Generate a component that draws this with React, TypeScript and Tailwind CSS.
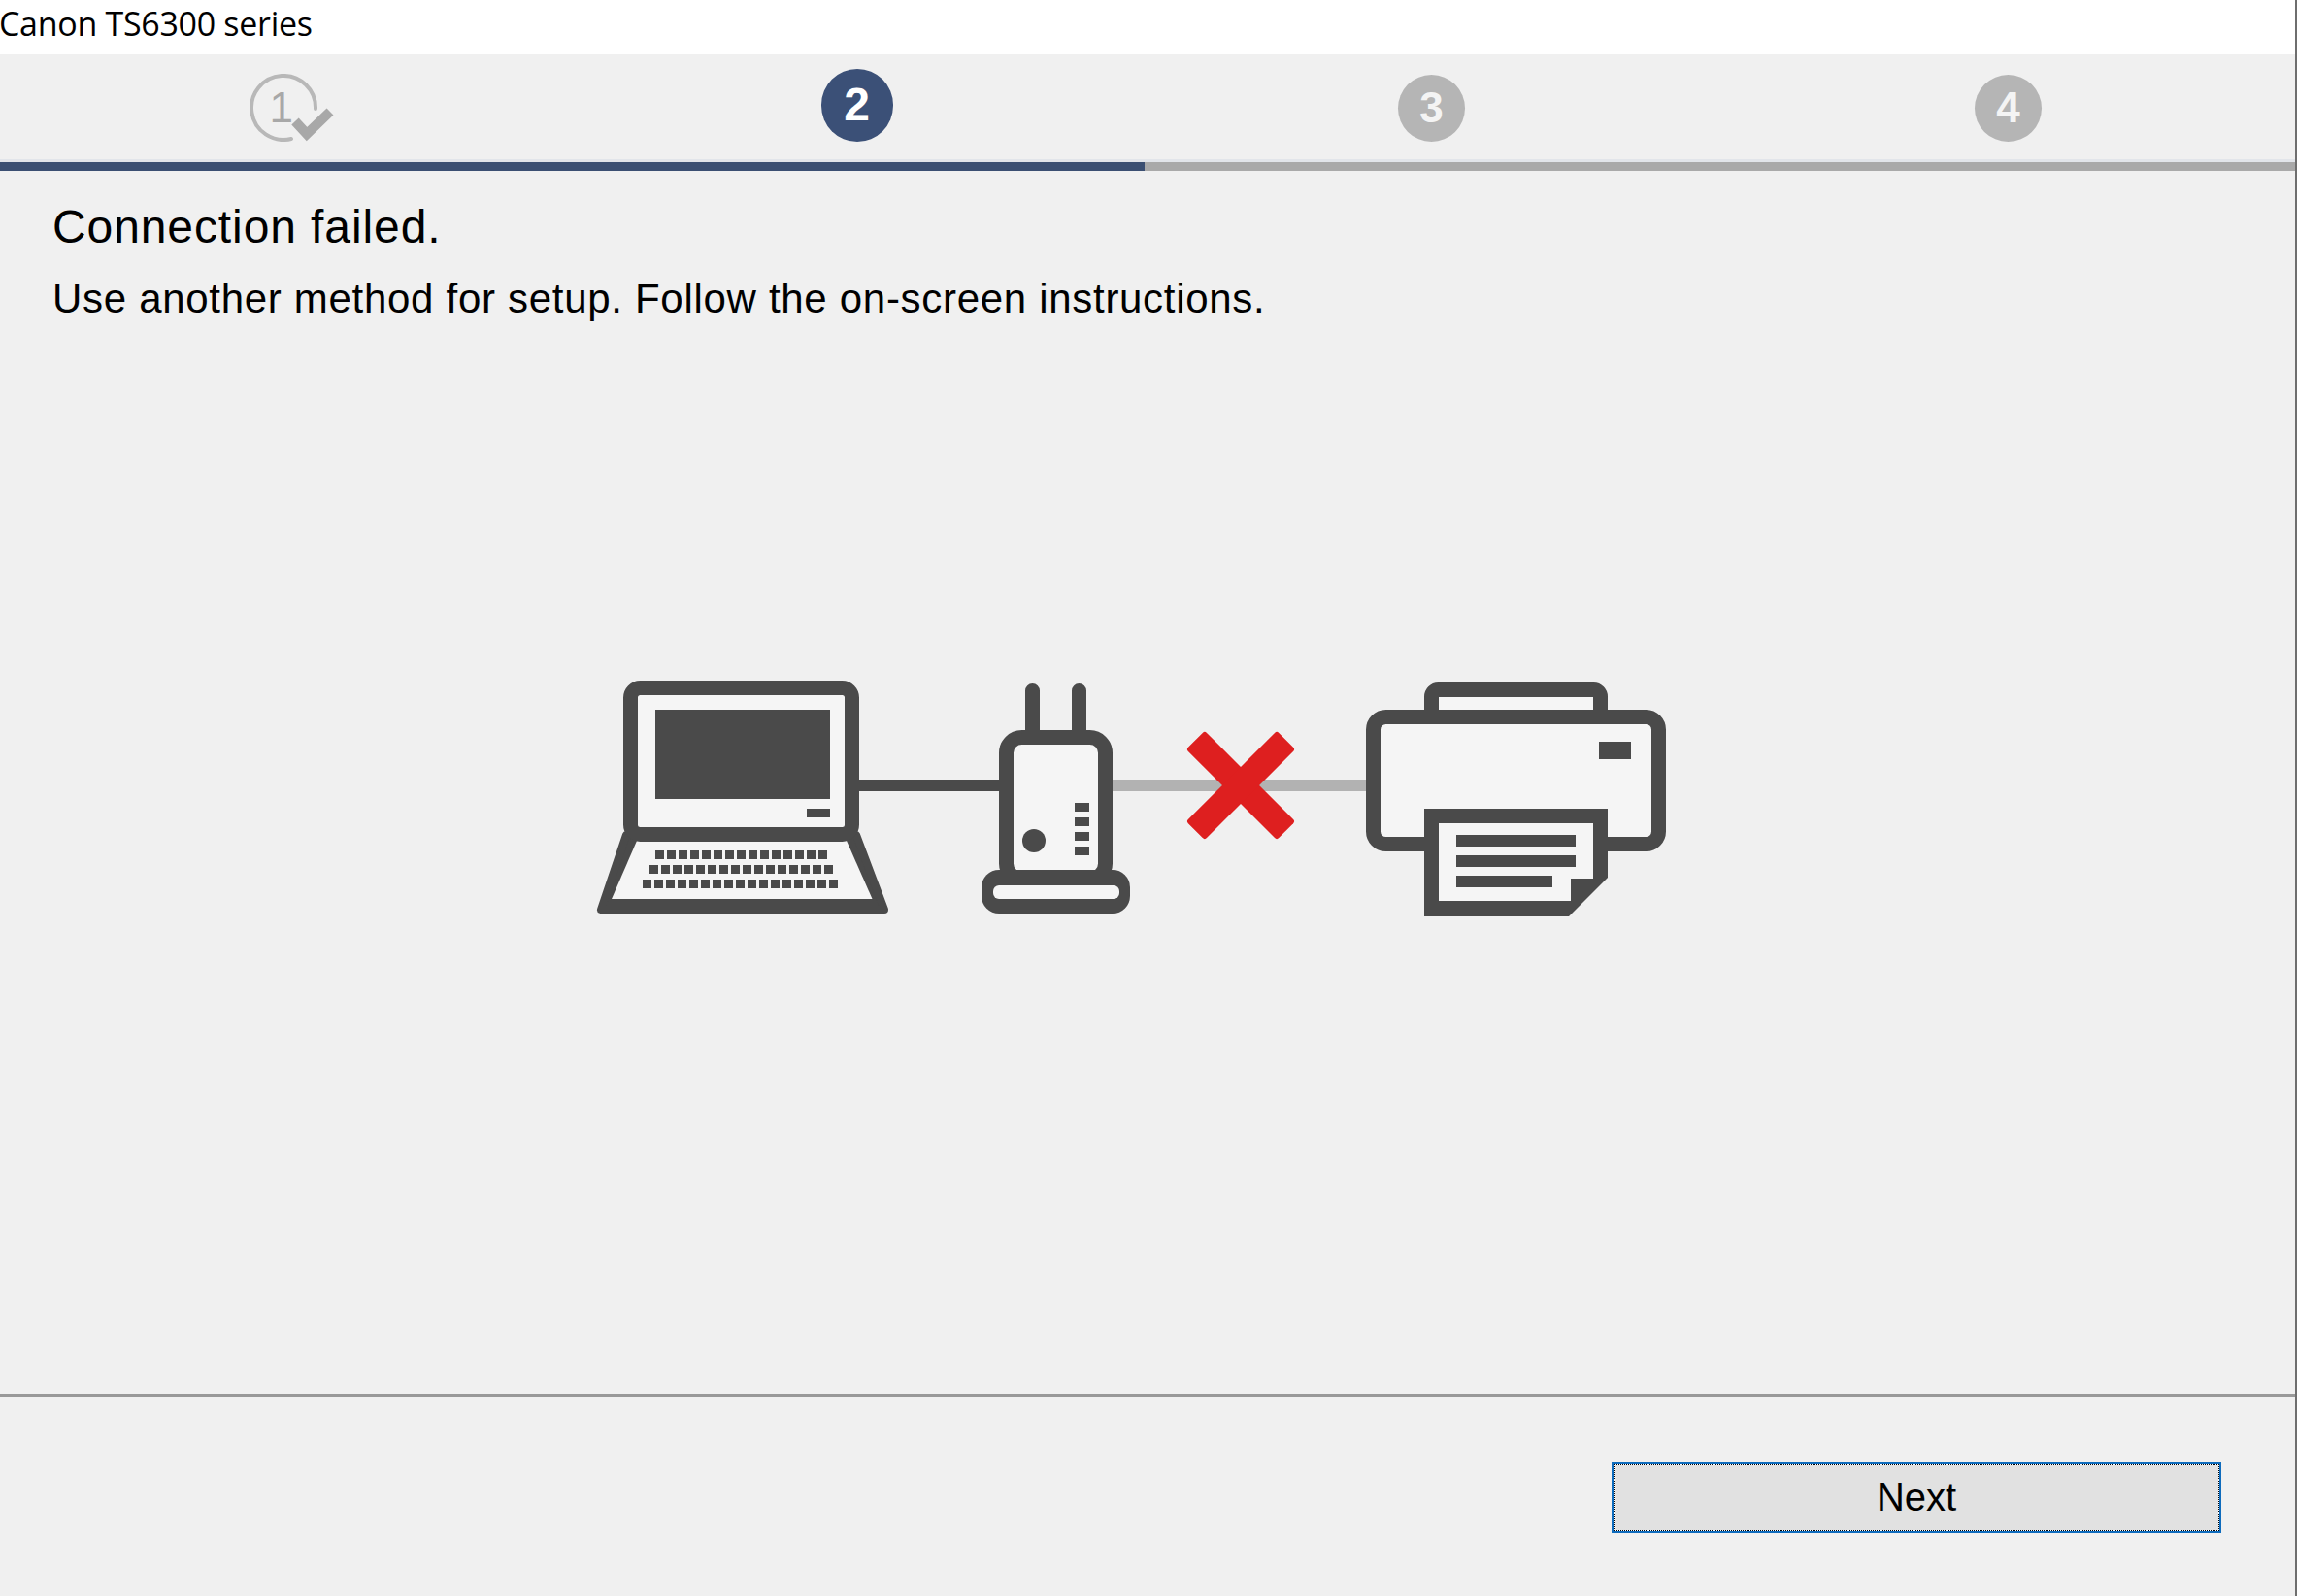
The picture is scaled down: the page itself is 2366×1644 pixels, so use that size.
const DARK = "#4a4a4a";

function Step({ n, active, cell }: { n: string; active?: boolean; cell: string }) {
  return (
    <div className={cell}>
      <div
        className={
          active
            ? "flex h-[75px] w-[74px] -translate-y-[3px] items-center justify-center rounded-full bg-[#3b5077] text-[48px] font-bold leading-none text-white"
            : "flex h-[69px] w-[69px] items-center justify-center rounded-full bg-[#b5b5b5] text-[44px] font-bold leading-none text-[#f4f4f4]"
        }
      >
        {n}
      </div>
    </div>
  );
}

function DoneStep() {
  return (
    <div className="flex justify-center pl-3 pr-2">
      <div className="relative h-[70px] w-[96px]">
        <svg viewBox="0 0 96 70" className="absolute inset-0 h-full w-full" fill="none">
          <path d="M 50 67 A 33 33 0 1 1 75 36" stroke="#b8b8b8" strokeWidth="4" strokeLinecap="round" />
          <path d="M 54 49 L 66 62 L 90 39" stroke="#a8a8a8" strokeWidth="10" strokeLinejoin="miter" />
        </svg>
        <span className="absolute left-[28px] top-[13px] text-[44px] leading-none text-[#a8a8a8]">1</span>
      </div>
    </div>
  );
}

function Illustration() {
  const row = (count: number, x0: number, y: number) =>
    Array.from({ length: count }, (_, i) => (
      <rect key={`${y}-${i}`} x={x0 + i * 12} y={y} width="9" height="9" fill={DARK} />
    ));
  return (
    <svg viewBox="600 690 1130 260" className="h-[260px] w-[1130px]">
      <rect x="885" y="803" width="146" height="12" fill={DARK} />
      <rect x="1146" y="803" width="262" height="12" fill="#b2b2b2" />

      {/* laptop */}
      <path
        d="M 645 860 L 619 937 L 911 937 L 882 860 Z"
        fill={DARK}
        stroke={DARK}
        strokeWidth="8"
        strokeLinejoin="round"
      />
      <path d="M 656 866 H 872 L 898.5 926 H 630 Z" fill="#f5f5f5" />
      <rect x="649.5" y="708.5" width="228" height="151" rx="10" fill="#f5f5f5" stroke={DARK} strokeWidth="15" />
      <rect x="675" y="731" width="180" height="92" fill={DARK} />
      <rect x="831" y="833" width="24" height="9" fill={DARK} />
      {row(15, 675, 876)}
      {row(16, 669, 891)}
      {row(17, 662, 906)}

      {/* router */}
      <path d="M 1063.5 752 V 711.5 M 1111.5 752 V 711.5" stroke={DARK} strokeWidth="15" strokeLinecap="round" />
      <rect x="1036.5" y="759.5" width="102" height="146" rx="16" fill="#f5f5f5" stroke={DARK} strokeWidth="15" />
      <rect x="1011" y="896" width="153" height="45" rx="18" fill={DARK} />
      <rect x="1023" y="912" width="130" height="14" rx="6" fill="#f5f5f5" />
      <circle cx="1065" cy="866" r="12" fill={DARK} />
      <rect x="1107" y="827" width="15" height="9" fill={DARK} />
      <rect x="1107" y="842" width="15" height="9" fill={DARK} />
      <rect x="1107" y="857" width="15" height="9" fill={DARK} />
      <rect x="1107" y="872" width="15" height="9" fill={DARK} />

      {/* cross */}
      <g transform="translate(1278 809) rotate(45)" fill="#de1f1f">
        <rect x="-66" y="-13.5" width="132" height="27" rx="3" />
      </g>
      <g transform="translate(1278 809) rotate(-45)" fill="#de1f1f">
        <rect x="-66" y="-13.5" width="132" height="27" rx="3" />
      </g>

      {/* printer */}
      <rect x="1474.5" y="710.5" width="174" height="40" rx="7" fill="#f5f5f5" stroke={DARK} strokeWidth="15" />
      <rect x="1414.5" y="738.5" width="294" height="131" rx="13" fill="#f5f5f5" stroke={DARK} strokeWidth="15" />
      <rect x="1647" y="764" width="33" height="18" fill={DARK} />
      <path d="M 1467 833 H 1656 V 904 L 1616 944 H 1467 Z" fill={DARK} />
      <path d="M 1482 848 H 1641 V 905 H 1618 V 928 H 1482 Z" fill="#f5f5f5" />
      <rect x="1500" y="860" width="123" height="12" fill={DARK} />
      <rect x="1500" y="881" width="123" height="12" fill={DARK} />
      <rect x="1500" y="902" width="99" height="12" fill={DARK} />
    </svg>
  );
}

export default function App() {
  return (
    <div className="flex h-[1644px] w-[2366px] flex-col overflow-hidden border-r-2 border-[#6e6e6e] bg-[#f0f0f0] font-['Liberation_Sans',Arial,sans-serif] text-black">
      <div className="flex h-14 items-center bg-white pb-[8px] font-['Open_Sans',sans-serif] text-[34px] leading-none tracking-[-0.3px]">
        <span className="-ml-[1px]">Canon TS6300 series</span>
      </div>

      <div className="grid h-[108px] grid-cols-4 items-center pt-[2px]">
        <DoneStep />
        <Step n="2" active cell="flex justify-center pr-2" />
        <Step n="3" cell="flex justify-center pr-1.5" />
        <Step n="4" cell="flex justify-center" />
      </div>

      <div className="flex h-3 border-t-[3px] border-[#e2e5ea]">
        <div className="w-[1179px] bg-[#3b4f72]" />
        <div className="flex-1 bg-[#a9a9a9]" />
      </div>

      <div className="flex flex-1 flex-col px-[54px]">
        <h1 className="mt-[32px] text-[48px] font-normal leading-[52px] tracking-[0.9px]">Connection failed.</h1>
        <p className="mt-[24px] text-[42px] leading-[48px] tracking-[0.7px]">
          Use another method for setup. Follow the on-screen instructions.
        </p>
        <div className="-ml-[54px] mt-[358px] pl-[600px]">
          <Illustration />
        </div>
      </div>

      <div className="flex h-[208px] justify-end border-t-[3px] border-[#999999] pr-[76px] pt-[67px]">
        <button className="block h-[73px] w-[628px] border-2 border-[#0f6cbd] bg-white p-0 text-[40px] leading-none">
          <span className="flex h-full w-full items-center justify-center border border-dotted border-black bg-[#e1e1e1] bg-clip-padding pb-[2px]">
            Next
          </span>
        </button>
      </div>
    </div>
  );
}
